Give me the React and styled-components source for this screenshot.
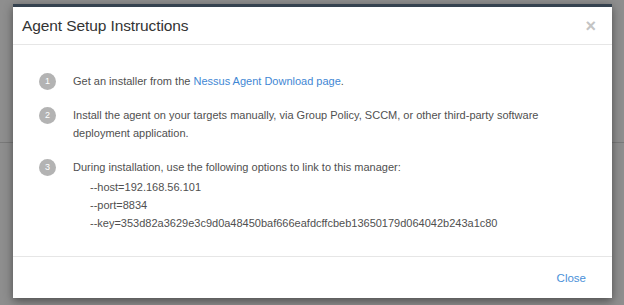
import styled, { createGlobalStyle } from 'styled-components';

const GlobalStyle = createGlobalStyle`
  html, body {
    margin: 0;
    padding: 0;
    height: 100%;
  }
  body {
    font-family: 'Liberation Sans', Arial, sans-serif;
    background: #fff;
  }
  #root {
    height: 100%;
  }
`;

const options = [
  '--host=192.168.56.101',
  '--port=8834',
  '--key=353d82a3629e3c9d0a48450baf666eafdcffcbeb13650179d064042b243a1c80',
];

const App = () => {
  return (
    <Page>
      <GlobalStyle />
      <Masthead />
      <Backdrop>
        <Modal>
          <Header>
            <Title>Agent Setup Instructions</Title>
            <CloseX aria-label='close'>×</CloseX>
          </Header>
          <Body>
            <Step>
              <Badge>1</Badge>
              <StepText>
                Get an installer from the <Link href='#'>Nessus Agent Download page</Link>.
              </StepText>
            </Step>
            <Step>
              <Badge>2</Badge>
              <StepText>
                Install the agent on your targets manually, via Group Policy, SCCM, or other
                third-party software deployment application.
              </StepText>
            </Step>
            <Step>
              <Badge>3</Badge>
              <StepText>
                During installation, use the following options to link to this manager:
                <Options>
                  {options.map((opt) => (
                    <li key={opt}>{opt}</li>
                  ))}
                </Options>
              </StepText>
            </Step>
          </Body>
          <Footer>
            <CloseLink href='#'>Close</CloseLink>
          </Footer>
        </Modal>
      </Backdrop>
    </Page>
  );
};

const Page = styled.div`
  position: relative;
  width: 100%;
  height: 100vh;
  overflow: hidden;
  background: #fdfdfd;
`;

const Masthead = styled.div`
  height: 142px;
  border-bottom: 1px solid #d8d8d8;
`;

const Backdrop = styled.div`
  position: absolute;
  inset: 0;
  background: rgba(0, 0, 0, 0.44);
  padding: 4px 12px 0 13px;
`;

const Modal = styled.div`
  width: 599px;
  background: #fff;
  border-top: 3px solid #35424f;
  box-shadow: 0 3px 9px rgba(0, 0, 0, 0.45);
`;

const Header = styled.div`
  height: 37px;
  display: flex;
  align-items: center;
  justify-content: space-between;
  padding: 0 16px 0 9px;
  border-bottom: 1px solid #e6e6e6;
`;

const Title = styled.h4`
  margin: 0;
  font-size: 15.5px;
  font-weight: normal;
  color: #333;
  letter-spacing: -0.1px;
`;

const CloseX = styled.span`
  font-size: 18px;
  line-height: 1;
  color: #c4c4c4;
  font-weight: bold;
`;

const Body = styled.div`
  display: flex;
  flex-direction: column;
  gap: 16px;
  padding: 27px 26px 24px 26px;
  font-size: 11px;
  line-height: 18px;
  color: #505050;
`;

const Step = styled.div`
  display: flex;
  align-items: flex-start;
  gap: 17px;
`;

const Badge = styled.span`
  flex: none;
  width: 17px;
  height: 17px;
  margin-top: 0.5px;
  border-radius: 50%;
  background: #b3b3b3;
  color: #fff;
  font-size: 9px;
  line-height: 17px;
  text-align: center;
`;

const StepText = styled.div`
  flex: 1;
`;

const Options = styled.ul`
  list-style: none;
  margin: 2px 0 0;
  padding: 0 0 0 17px;
`;

const Link = styled.a`
  color: #3f87d4;
  text-decoration: none;
`;

const Footer = styled.div`
  height: 41px;
  display: flex;
  align-items: center;
  justify-content: flex-end;
  padding: 0 26px;
  border-top: 1px solid #e6e6e6;
`;

const CloseLink = styled.a`
  font-size: 11.5px;
  color: #4a90d9;
  text-decoration: none;
`;

export default App;
